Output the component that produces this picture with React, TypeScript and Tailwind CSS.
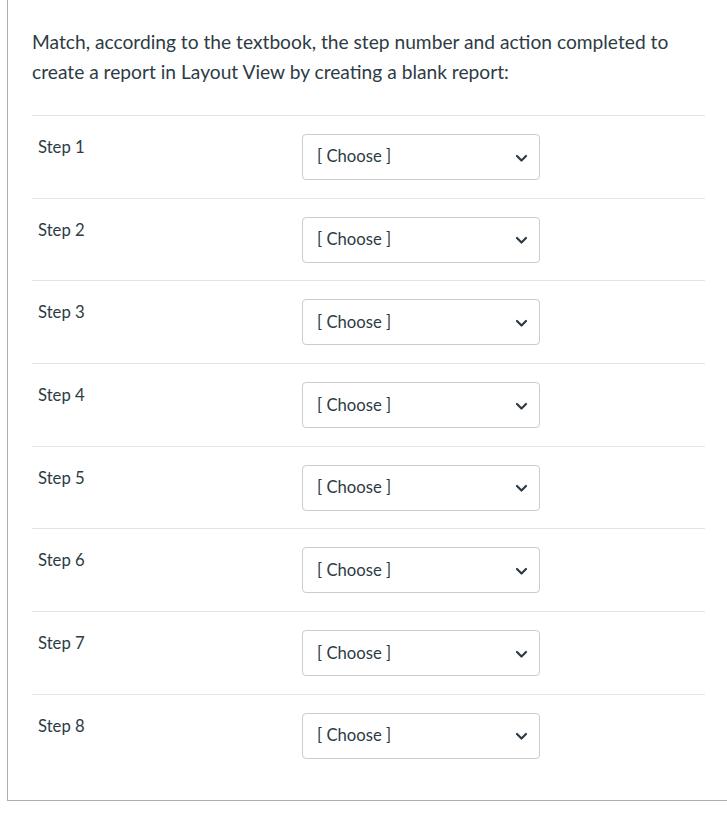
import React from 'react';

const steps = [1, 2, 3, 4, 5, 6, 7, 8];

const Chevron: React.FC = () => (
  <svg width="13" height="9" viewBox="0 0 13 9" fill="none" className="shrink-0 mt-[2px]">
    <path d="M2 2 L6.5 6.5 L11 2" stroke="#2d3b45" strokeWidth="2.2" strokeLinecap="round" strokeLinejoin="round" />
  </svg>
);

const StepRow: React.FC<{ n: number; last: boolean }> = ({ n, last }) => (
  <div className={`flex items-start pt-[18px] pb-[17.7px] ${last ? '' : 'border-b border-[#e2e4e6]'}`}>
    <div className="w-[270px] pl-[6px] pt-[1px] text-[16.7px] leading-6 text-[#2d3b45]">Step {n}</div>
    <div className="w-[238px] h-[46px] flex items-center justify-between pl-[14px] pr-[11px] border border-[#c7cdd1] rounded-[4px] bg-white">
      <span className="text-[16.7px] text-[#2d3b45]">[ Choose ]</span>
      <Chevron />
    </div>
  </div>
);

export default function App() {
  return (
    <div className="min-h-[818px] bg-white" style={{ fontFamily: 'Lato, "Noto Sans", sans-serif' }}>
      <div className="ml-[7px] border-l border-b border-[#a9b0b5] pl-[24px] pr-[22px] pt-[27px] pb-[23px]">
        <p className="text-[19.2px] leading-[30px] text-[#2d3b45] pb-[28px] border-b border-[#e2e4e6]">
          Match, according to the textbook, the step number and action completed to create a report in Layout View by creating a blank report:
        </p>
        {steps.map((n, i) => (
          <StepRow key={n} n={n} last={i === steps.length - 1} />
        ))}
      </div>
    </div>
  );
}
